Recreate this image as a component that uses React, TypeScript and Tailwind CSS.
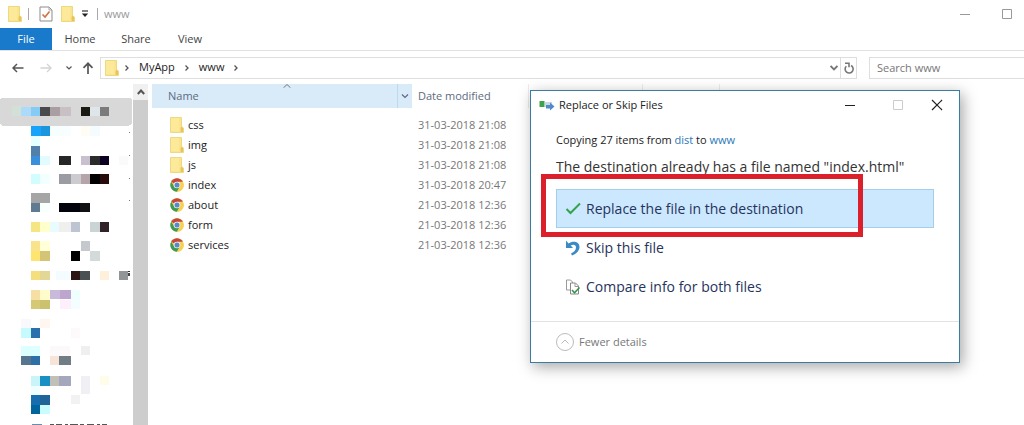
import type { ReactNode } from "react";

type Cell = [number, number, number, number, string];

/* x, y, width, height, fill of each block in the obscured navigation tree */
const cells: Cell[] = [
  [12, 22, 10, 10, "#d3e0d8"], [21, 23, 10, 9, "#addaf8"], [31, 23, 9, 9, "#84cbf6"], [40, 23, 10, 9, "#4a4a4d"],
  [50, 23, 10, 9, "#a99ea2"], [60, 23, 11, 9, "#c9c0c5"], [81, 23, 9, 9, "#191b12"], [90, 23, 10, 9, "#dfe6ea"], [100, 23, 9, 9, "#7b7b7b"],
  [31, 42, 10, 10, "#17a3fb"], [41, 42, 9, 10, "#1b95dc"], [50, 42, 21, 10, "#f7feff"], [81, 42, 9, 10, "#fffdf3"], [90, 42, 10, 10, "#f5fcff"],
  [31, 52, 9, 10, "#e6ffff"], [31, 62, 9, 10, "#5280a8"], [31, 72, 9, 9, "#388fdb"], [40, 72, 10, 9, "#e2fbff"],
  [59, 72, 12, 9, "#262626"], [81, 72, 9, 9, "#c9c0cf"], [90, 72, 10, 9, "#2b2b2c"], [100, 72, 9, 9, "#0c0022"], [119, 72, 9, 9, "#fafafa"],
  [31, 90, 9, 10, "#d2fdff"], [40, 90, 10, 10, "#f2ffff"], [59, 90, 12, 10, "#9b9ba3"], [71, 90, 10, 10, "#cccbd0"],
  [81, 90, 9, 10, "#b5a5aa"], [90, 90, 10, 10, "#000000"], [100, 90, 9, 10, "#2a0b0c"],
  [31, 109, 19, 10, "#a5a5a5"], [31, 119, 9, 9, "#5f7a91"], [40, 119, 10, 9, "#f7ffff"], [59, 119, 21, 9, "#01020a"], [80, 119, 10, 9, "#111113"],
  [31, 138, 9, 10, "#f5e583"], [40, 138, 10, 10, "#ffffcb"], [50, 138, 9, 10, "#e8fcff"], [59, 138, 12, 10, "#efefed"],
  [71, 138, 9, 10, "#bcc5d1"], [90, 138, 10, 10, "#cbd4d5"], [100, 138, 9, 10, "#302227"],
  [31, 157, 9, 10, "#f9e38b"], [40, 157, 10, 10, "#ffffd8"], [81, 157, 9, 10, "#c5c8cd"],
  [31, 167, 9, 10, "#fde56f"], [40, 167, 10, 10, "#d4c476"], [71, 167, 9, 10, "#000000"], [90, 167, 10, 10, "#d4d9d9"],
  [31, 187, 9, 9, "#f5df7c"], [40, 187, 10, 9, "#e2d797"], [56, 187, 14, 9, "#f5fcff"], [71, 187, 9, 9, "#2c1714"],
  [80, 187, 10, 9, "#4b5053"], [100, 187, 9, 9, "#fff0dc"], [119, 187, 9, 9, "#929596"],
  [31, 206, 9, 10, "#f7dfa4"], [40, 206, 10, 10, "#fffccb"], [50, 206, 10, 9, "#c9badb"], [60, 206, 11, 9, "#bea5ce"], [71, 206, 9, 10, "#effeff"],
  [31, 216, 9, 9, "#d5c976"], [40, 216, 10, 9, "#ccc16f"], [60, 216, 11, 9, "#fdeffb"], [71, 216, 9, 9, "#f4fdff"],
  [21, 235, 10, 9, "#f8f8fd"], [40, 235, 10, 9, "#fff6f0"],
  [21, 244, 10, 10, "#c5fafe"], [31, 244, 9, 10, "#2a70ad"], [71, 244, 9, 10, "#fcfafb"],
  [21, 262, 19, 10, "#dcffff"], [50, 262, 20, 10, "#fbf9f9"], [81, 262, 9, 9, "#efeff0"],
  [21, 272, 10, 9, "#587590"], [31, 272, 9, 9, "#2e6fa7"], [50, 272, 9, 9, "#f7e4d9"], [59, 272, 12, 9, "#707d84"],
  [31, 292, 9, 10, "#c9f4f9"], [40, 292, 10, 10, "#1890c4"], [50, 292, 9, 10, "#c0c0b8"], [59, 292, 12, 10, "#a5a8bc"],
  [81, 292, 9, 18, "#f0eff4"], [100, 292, 9, 9, "#fffde9"], [31, 302, 9, 9, "#effeff"],
  [31, 311, 9, 10, "#176eae"], [40, 311, 10, 10, "#206498"], [71, 311, 9, 9, "#f2f2f3"],
  [31, 321, 9, 9, "#00659d"], [40, 321, 10, 9, "#c8fcff"],
  [32, 340, 10, 2, "#6c8cad"],
  [129, 48, 1, 1, "#777777"], [129, 71, 1, 1, "#777777"], [129, 94, 1, 1, "#777777"], [129, 116, 1, 1, "#777777"],
  [128, 187, 2, 1, "#333333"], [128, 189, 2, 3, "#444444"],
];

const files = [
  { name: "css", date: "31-03-2018 21:08", folder: true },
  { name: "img", date: "31-03-2018 21:08", folder: true },
  { name: "js", date: "31-03-2018 21:08", folder: true },
  { name: "index", date: "31-03-2018 20:47", folder: false },
  { name: "about", date: "21-03-2018 12:36", folder: false },
  { name: "form", date: "21-03-2018 12:36", folder: false },
  { name: "services", date: "21-03-2018 12:36", folder: false },
];

function Folder() {
  return (
    <svg className="h-4 w-3.5 shrink-0" viewBox="0 0 14 16" aria-hidden="true">
      <path d="M.5.5h11v9l2 1.500v4.500H.5z" fill="#fbe48e" stroke="#eed981" strokeWidth="1" />
      <path d="M11.500 9.500c-1.300 1-1 3-.8 5.500h2.300v-4z" fill="#e6c65c" />
      <path d="M1 1h8v13H1z" fill="#fce999" />
    </svg>
  );
}

function Chrome() {
  return (
    <svg className="size-3.5 shrink-0" viewBox="0 0 14 14" aria-hidden="true">
      <circle cx="7" cy="7" r="6.700" fill="#f7d154" />
      <path d="M7 7 1.200 3.650A6.700 6.700 0 0 1 12.800 3.650z" fill="#c5463c" />
      <path d="M7 7 4.200 8.600 1.200 3.650A6.700 6.700 0 0 0 7 13.700l2.900-5.100z" fill="#3f9a58" />
      <path d="M7 3.700h5.900A6.700 6.700 0 0 1 7 13.700l2.900-5z" fill="#f7d154" />
      <circle cx="7" cy="7" r="3.300" fill="#eef1f4" />
      <circle cx="7" cy="7" r="2.500" fill="#5b88c6" />
    </svg>
  );
}

type StrokeProps = { d: string; box: string; className: string; width?: number };

function Stroke({ d, box, className, width = 1 }: StrokeProps) {
  return (
    <svg className={className} viewBox={box} fill="none" stroke="currentColor" strokeWidth={width} aria-hidden="true">
      <path d={d} />
    </svg>
  );
}

function Minimize() {
  return <Stroke className="size-2.5" box="0 0 10 10" d="M0 5.500h10" />;
}

function Maximize() {
  return <Stroke className="size-2.5" box="0 0 10 10" d="M.5.5h9v9h-9z" />;
}

function Crumb() {
  return <Stroke className="h-1.5 w-1 shrink-0 text-[#555]" box="0 0 4 6" width={1.3} d="M.5.5 3 3 .5 5.500" />;
}

function TitleBar() {
  return (
    <header className="flex h-7 items-center pl-2">
      <Folder />
      <span className="ml-1.5 h-3 w-px bg-[#aaa]" />
      <button aria-label="Properties" className="ml-2.5">
        <svg className="h-4 w-3.5" viewBox="0 0 14 16" fill="none" aria-hidden="true">
          <path d="M1 1h9l3 3v11H1z" fill="#fff" stroke="#8b8b8b" />
          <path d="M10 1v3h3" stroke="#a5a5a5" />
          <path d="m3.500 8.500 2.500 2.500 4.500-5.500" stroke="#d4713d" strokeWidth="1.600" />
        </svg>
      </button>
      <button aria-label="New folder" className="ml-2">
        <Folder />
      </button>
      <button aria-label="Customize toolbar" className="ml-1.5">
        <svg className="size-2" viewBox="0 0 8 8" aria-hidden="true">
          <path d="M1 1h6" stroke="#333" strokeWidth="1.200" />
          <path d="M.8 3.500h6.400L4 7z" fill="#222" />
        </svg>
      </button>
      <span className="ml-2 h-3 w-px bg-[#aaa]" />
      <h1 className="ml-1.5 text-[11px] text-[#999]">www</h1>
      <div className="ml-auto flex items-center gap-8 pr-3 text-[#999]">
        <button aria-label="Minimize"><Minimize /></button>
        <button aria-label="Maximize"><Maximize /></button>
      </div>
    </header>
  );
}

function Ribbon() {
  return (
    <nav className="flex h-[23px] border-b border-[#e2e2e2] text-[11px] text-[#444]">
      <button className="w-[52px] bg-[#1979ca] text-white">File</button>
      <button className="w-14">Home</button>
      <button className="w-14">Share</button>
      <button className="w-[52px]">View</button>
    </nav>
  );
}

function AddressBar() {
  return (
    <div className="flex h-[33px] items-center">
      <div className="flex w-[100px] shrink-0 items-center pl-3 text-[#555]">
        <button aria-label="Back"><Stroke className="h-2.5 w-3" box="0 0 12 10" width={1.5} d="M11.500 5H1M5 1 1 5l4 4" /></button>
        <button aria-label="Forward" className="ml-4 text-[#d4d4d4]"><Stroke className="h-2.5 w-3" box="0 0 12 10" width={1.3} d="M.5 5H11M7 1l4 4-4 4" /></button>
        <button aria-label="Recent locations" className="ml-3.5"><Stroke className="h-1.5 w-1.5" box="0 0 6 6" width={1.2} d="m.5 1.500 2.500 2.500 2.500-2.500" /></button>
        <button aria-label="Up" className="ml-2.5"><Stroke className="h-3 w-3" box="0 0 12 12" width={1.7} d="M6 12V1.500M1.500 5.800 6 1.300l4.500 4.500" /></button>
      </div>
      <div className="flex h-[22px] min-w-0 flex-1 items-center border border-[#dedede] pl-1 text-[11px] text-[#222]">
        <Folder />
        <span className="ml-1.5 flex items-center gap-2.5">
          <Crumb />
          <a href="#myapp">MyApp</a>
          <Crumb />
          <a href="#www">www</a>
          <Crumb />
        </span>
        <button aria-label="Previous locations" className="ml-auto pr-0.5 text-[#777]"><Stroke className="h-1.5 w-2" box="0 0 8 6" width={1.8} d="m.6 1 3.400 3.500L7.400 1" /></button>
        <button aria-label="Refresh" className="flex h-full w-4 items-center justify-center border-l border-[#dedede] text-[#777]">
          <Stroke className="size-3" box="0 0 12 12" width={1.6} d="M3.300 4.200A4 4 0 1 0 8 3.500M2 1.300h4v4" />
        </button>
      </div>
      <input
        aria-label="Search www"
        placeholder="Search www"
        className="ml-3 h-[22px] w-[155px] border border-r-0 border-[#dedede] px-[7px] text-[11px] placeholder:text-[#777] focus:outline-none"
      />
    </div>
  );
}

function Sidebar() {
  return (
    <aside className="flex w-[148px] shrink-0">
      <div className="flex-1 overflow-hidden">
        <svg className="h-[342px] w-[132px]" viewBox="0 0 132 342" shapeRendering="crispEdges" role="img" aria-label="Obscured folder tree">
          <rect x="0" y="14" width="132" height="27" rx="3" fill="#d8d8d8" />
          <rect x="2" y="38" width="127" height="4" fill="#d8d8d8" />
          {cells.map(([x, y, w, h, fill], i) => (
            <rect key={i} x={x} y={y} width={w} height={h} fill={fill} />
          ))}
          <path d="M50 340.500h4M56 340.500h6M65 340.500h3M70 340.500h8M80 340.500h4M87 340.500h7M97 340.500h3M102 340.500h5" stroke="#555" strokeWidth="1" />
        </svg>
      </div>
      <div className="w-[15px] bg-[#cdcdcd]">
        <button aria-label="Scroll up" className="flex h-4 w-full items-center justify-center bg-[#f0f0f0] text-[#555]">
          <Stroke className="h-1.5 w-2" box="0 0 8 6" width={2} d="m.8 5 3.200-3.500L7.200 5" />
        </button>
      </div>
    </aside>
  );
}

function FileList() {
  return (
    <main className="ml-1 min-w-0 flex-1">
      <table className="w-full table-fixed text-left text-[11px]">
        <colgroup>
          <col className="w-[260px]" />
          <col className="w-[116px]" />
          <col className="w-[114px]" />
          <col className="w-[77px]" />
          <col />
        </colgroup>
        <thead>
          <tr className="h-6 text-[#5c6b80]">
            <th className="relative bg-[#d9ebf9] p-0 pl-4 font-normal">
              <Stroke className="absolute top-0 left-[131px] h-1 w-2 text-[#777]" box="0 0 8 4" d="m.5 3.800 3.500-3.300 3.500 3.300" />
              <span className="flex h-6 items-center justify-between">
                Name
                <button aria-label="Filter by name" className="flex h-full w-[15px] items-center justify-center border-l border-[#bcd9ee]">
                  <Stroke className="h-1.5 w-2" box="0 0 8 6" width={1.2} d="m1 1.500 3 3 3-3" />
                </button>
              </span>
            </th>
            <th className="border-r border-[#ececec] p-0 pl-1.5 font-normal whitespace-nowrap">Date modified</th>
            <th aria-label="Type" className="border-r border-[#ececec] p-0" />
            <th aria-label="Size" className="border-r border-[#ececec] p-0" />
            <th aria-label="More" className="p-0" />
          </tr>
        </thead>
        <tbody>
          <tr className="h-[7px]"><td className="p-0" colSpan={5} /></tr>
          {files.map((f) => (
            <tr key={f.name} className="h-5">
              <td className="p-0 pl-[18px]">
                <span className="flex h-5 items-center gap-1 text-[#222]">
                  {f.folder ? <Folder /> : <Chrome />}
                  {f.name}
                </span>
              </td>
              <td className="p-0 pl-1.5 whitespace-nowrap text-[#777]">{f.date}</td>
              <td className="p-0" colSpan={3} />
            </tr>
          ))}
        </tbody>
      </table>
    </main>
  );
}

function Choice({ icon, children, selected = false }: { icon: ReactNode; children: ReactNode; selected?: boolean }) {
  return (
    <button
      className={
        selected
          ? "relative flex h-[39px] w-full items-center gap-[5px] border border-[#a3cfea] bg-[#cce8ff] pl-2 text-left"
          : "flex h-[39px] w-full items-center gap-[5px] border border-transparent pl-2 text-left"
      }
    >
      {icon}
      {children}
      {selected && <span className="pointer-events-none absolute -top-4 -left-4 h-[63px] w-[322px] border-5 border-[#dc202b]" />}
    </button>
  );
}

function ReplaceDialog() {
  return (
    <section
      role="dialog"
      aria-label="Replace or Skip Files"
      className="absolute top-[90px] left-[530px] w-[430px] border border-[#397da3] bg-white shadow-[3px_4px_14px_rgba(0,0,0,0.35)]"
    >
      <div className="flex h-7 items-center pl-2 text-[#222]">
        <svg className="h-3 w-4" viewBox="0 0 16 12" aria-hidden="true">
          <path d="M.5 2h5v6h-5z" fill="#3da34b" />
          <path d="M6 3h7v5H6z" fill="#cbd8e3" />
          <path d="M7 6h4V3.500L15.500 7.500 11 11.500V9.500H7z" fill="#4f8ac9" />
        </svg>
        <h2 className="ml-1 text-[11px]">Replace or Skip Files</h2>
        <div className="ml-auto flex items-center pr-4">
          <button aria-label="Minimize"><Minimize /></button>
          <button aria-label="Maximize" disabled className="ml-[38px] text-[#ccc]"><Maximize /></button>
          <button aria-label="Close" className="ml-7"><Stroke className="size-3" box="0 0 12 12" width={1.2} d="m1 1 10 10M11 1 1 11" /></button>
        </div>
      </div>
      <div className="px-[25px] pt-3 pb-[15px]">
        <p className="text-[11px] leading-[18px] text-[#222]">
          Copying 27 items from <a href="#dist" className="text-[#2a78b8]">dist</a> to <a href="#www" className="text-[#2a78b8]">www</a>
        </p>
        <p className="mt-2 mb-3 text-[14px] leading-5 text-[#333]">The destination already has a file named "index.html"</p>
        <div className="flex flex-col text-[14px] text-[#26335c]">
          <Choice
            selected
            icon={<Stroke className="h-4 w-4 text-[#35a14a]" box="0 0 16 16" width={2} d="m1.500 8 4 4L15 2.500" />}
          >
            Replace the file in the destination
          </Choice>
          <Choice
            icon={
              <svg className="size-4" viewBox="0 0 16 16" aria-hidden="true">
                <path d="M1 .5v7.500h7L5.700 5.600C8 4 11 4.500 11 7.500c0 2.500-2 4.500-5 6l1 2c4.500-1.700 7.500-5 7.500-8.500C14.500 1.500 8 .2 3.600 3.500z" fill="#398bc8" />
              </svg>
            }
          >
            Skip this file
          </Choice>
          <Choice
            icon={
              <svg className="size-4" viewBox="0 0 16 16" fill="none" aria-hidden="true">
                <path d="M1.500 1h4l2 2v8h-6z" stroke="#999" fill="#fff" />
                <path d="M5.500 4h5l3 3v8h-8z" stroke="#888" fill="#fff" />
                <path d="M10 4v3.500h3.500" stroke="#999" />
                <path d="m7 11 2.500 2.800 5-5.300" stroke="#35944a" strokeWidth="1.500" />
              </svg>
            }
          >
            Compare info for both files
          </Choice>
        </div>
      </div>
      <div className="border-t border-[#e3e3e3] px-[25px] py-[11px]">
        <button className="flex items-center gap-[5px] text-[11px] leading-[18px] text-[#777]">
          <svg className="size-[18px] text-[#bbb]" viewBox="0 0 18 18" fill="none" stroke="currentColor" aria-hidden="true">
            <circle cx="9" cy="9" r="8.500" />
            <path d="m5.500 10.500 3.500-3.500 3.500 3.500" />
          </svg>
          Fewer details
        </button>
      </div>
    </section>
  );
}

export default function App() {
  return (
    <div className="relative min-h-screen overflow-hidden bg-white font-['Open_Sans','Noto_Sans',sans-serif]">
      <TitleBar />
      <Ribbon />
      <AddressBar />
      <div className="flex">
        <Sidebar />
        <FileList />
      </div>
      <ReplaceDialog />
    </div>
  );
}
